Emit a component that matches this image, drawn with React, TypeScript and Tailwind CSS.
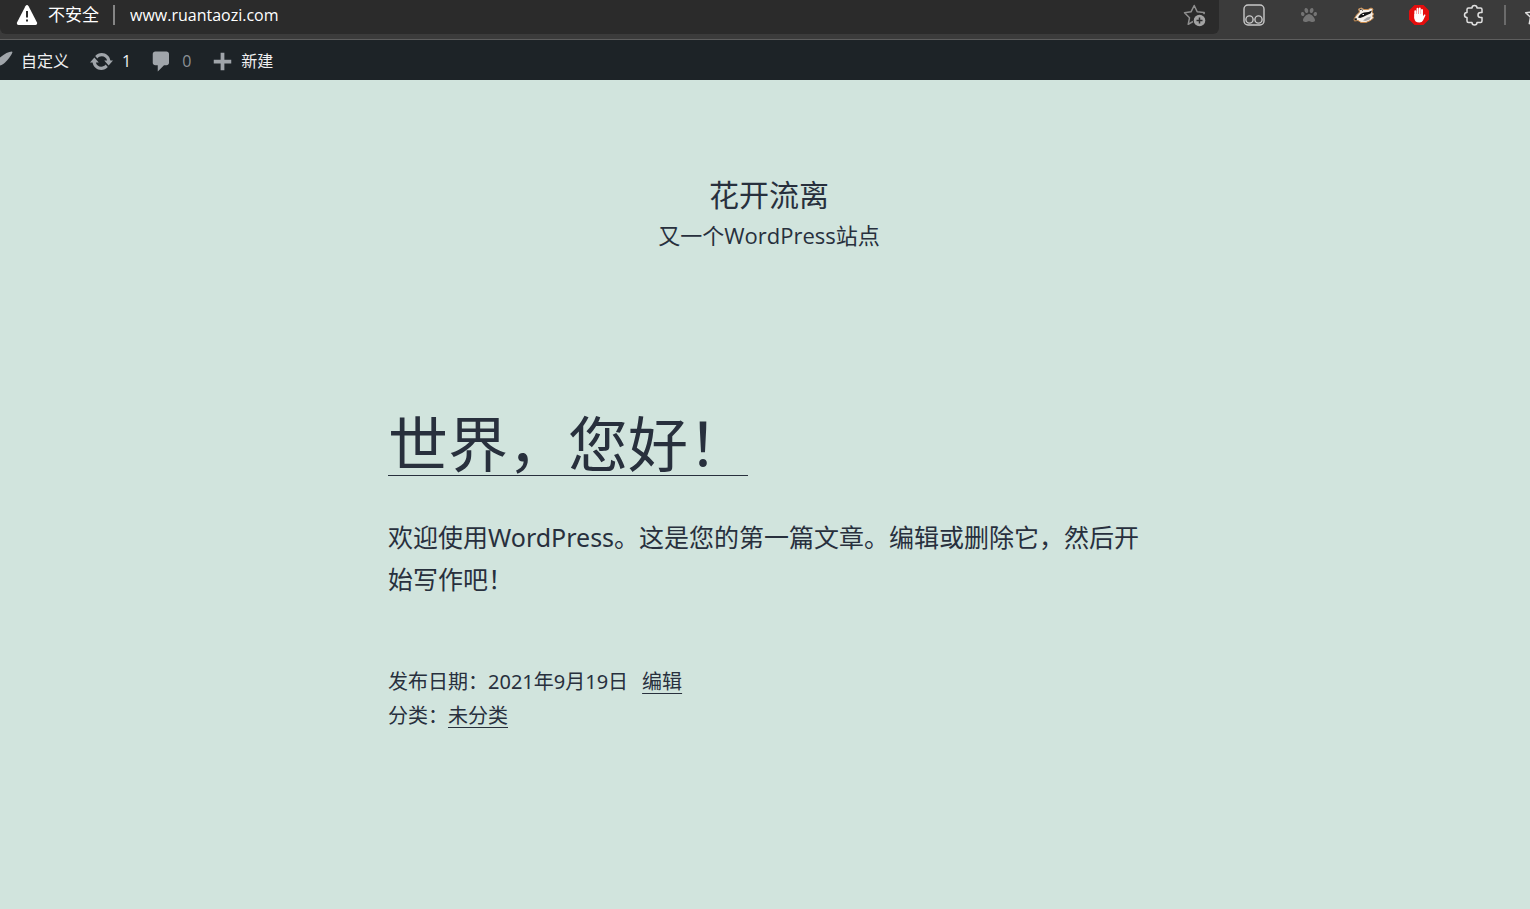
import type { ReactNode } from "react";
import { FaPaw } from "react-icons/fa";

const WarningIcon = () => (
  <svg width="22" height="22" viewBox="0 0 22 22" fill="#fff">
    <path d="M9.4 2.2Q11 0 12.6 2.2L21 18.6Q21.6 21 19.4 21H2.6Q.4 21 1 18.6Z" />
    <path d="M11 7v6.5M11 15.5v2" stroke="#2b2b2b" strokeWidth="2" />
  </svg>
);

const FavoriteIcon = () => (
  <svg width="24" height="24" viewBox="0 0 24 24" fill="none">
    <path
      d="M10 18.5l-4.8 2.8 1.3-6.5L1.5 9.8l6.5-1L11.2 2.5l3 6.3 6.8.6q.8.6-.5 1.6"
      stroke="#8f8f8f"
      strokeWidth="1.5"
      strokeLinejoin="round"
    />
    <circle cx="16.5" cy="17.5" r="5.8" fill="#a3a3a3" />
    <path d="M16.5 14.5v6M13.5 17.5h6" stroke="#2b2b2b" strokeWidth="1.5" />
  </svg>
);

const MonkeyIcon = () => (
  <svg width="22" height="22" viewBox="0 0 22 22" fill="none" stroke="#c8c8c8" strokeWidth="1.4">
    <rect x="1" y="1" width="20" height="20" rx="4" fill="#454545" />
    <circle cx="6.5" cy="15.5" r="3.6" />
    <circle cx="15.5" cy="15.5" r="3.6" />
  </svg>
);

const BadgerIcon = () => (
  <svg width="22" height="18" viewBox="0 0 22 18">
    <path
      d="M1 13L3.5 9 6.5 6 5.5 3 8.5 2 11 3.5 15 3.5 18 2 20 3 19 6 20.500 8 19.500 10 20.500 12 17.500 14.500 13 16.500 8 16.500 5 14.500 1.500 15Z"
      fill="#f4efe8"
      stroke="#c98a4b"
      strokeWidth="1"
      strokeLinejoin="round"
    />
    <path d="M1.500 12.300h2.300v2H1.500z" fill="#151515" />
    <path d="M5 11.500Q7 7.500 11 6.500L15.500 6 19 4.500 17.500 7.500 14 9 10 11 7 12z" fill="#151515" />
    <path d="M9.500 8.500h1.500" stroke="#fff" />
    <path d="M10 14.500l4-3 4-1-1.500 3-4 1.500z" fill="#a5a5a5" />
    <path d="M6.500 3.800l2-.5 1.500 1.200" stroke="#333" fill="none" />
  </svg>
);

const HandIcon = () => (
  <svg width="22" height="22" viewBox="0 0 22 22">
    <path d="M6.5 1h9L21 6.5v9L15.5 21h-9L1 15.5v-9z" fill="#e40d0d" />
    <path
      d="M7.3 14V7.2M9.5 12V4.8M11.8 12V4.5M14 12V6"
      stroke="#fff"
      strokeWidth="1.9"
      strokeLinecap="round"
    />
    <path d="M6.4 10h8.5v2.5l1.3-2q1.5-.5 1.2 1L15 16.5q-1 2-3.5 2Q6.4 18.5 6.4 14z" fill="#fff" />
  </svg>
);

const PuzzleIcon = () => (
  <svg width="22" height="22" viewBox="0 0 22 22" fill="none" stroke="#e0e0e0" strokeWidth="1.5">
    <path
      d="M5.5 4H9a2.500 2.500 0 0 1 5 0h3.500q1.500 0 1.500 1.500V8.500h-1.500a2.500 2.500 0 0 0 0 5H19V17q0 1.500-1.500 1.500H14a2.500 2.500 0 0 1-5 0H5.500Q4 18.500 4 17v-3.500a2.500 2.500 0 0 1 0-5V5.500Q4 4 5.500 4z"
      strokeLinejoin="round"
    />
  </svg>
);

const StarIcon = () => (
  <svg width="22" height="22" viewBox="0 0 22 22" fill="none" stroke="#e0e0e0" strokeWidth="1.5">
    <path d="M11 2l2.800 6 6.500.8-4.800 4.400 1.300 6.500L11 16.500 5.300 19.700l1.200-6.500L1.700 8.800 8.200 8z" strokeLinejoin="round" />
  </svg>
);

const BarIcon = ({ d }: { d: string }) => (
  <svg width="25" height="25" viewBox="0 0 20 20" fill="#a0a5aa" className="shrink-0">
    <path d={d} />
  </svg>
);

const updatePath =
  "M10.2 3.28c3.53 0 6.43 2.61 6.92 6h2.08l-3.5 4-3.5-4h2.32c-.45-1.97-2.21-3.45-4.32-3.45-1.45 0-2.73.71-3.54 1.78L4.95 5.66C6.23 4.2 8.11 3.28 10.2 3.28zm-.4 13.44c-3.52 0-6.43-2.61-6.92-6H.8l3.5-4c1.17 1.33 2.33 2.67 3.5 4H5.48c.45 1.97 2.21 3.45 4.32 3.45 1.45 0 2.73-.71 3.54-1.78l1.71 1.95c-1.28 1.46-3.15 2.38-5.25 2.38z";
const commentPath =
  "M5 2h9q.82 0 1.41.59T16 4v7q0 .82-.59 1.41T14 13h-2l-5 5v-5H5q-.82 0-1.41-.59T3 11V4q0-.82.59-1.41T5 2z";
const plusPath = "M17 8.5v3h-5.5V17h-3v-5.5H3v-3h5.5V3h3v5.5z";

const ToolButton = ({ label, children }: { label: string; children: ReactNode }) => (
  <button aria-label={label} className="flex h-[30px] w-[55px] shrink-0 items-center justify-center">
    {children}
  </button>
);

const BrowserBar = () => (
  <div className="flex h-10 items-start overflow-hidden border-b border-[#5e5e5e] bg-[#3b3b3b]">
    <div className="flex h-[34px] flex-1 items-start rounded-b-md bg-[#2b2b2b] pl-4 pr-3">
      <button className="flex h-[30px] items-center gap-2.5 text-[17px] text-white">
        <WarningIcon />
        不安全
      </button>
      <div className="ml-3.5 mt-[5px] h-5 w-0.5 bg-[#858585]" />
      <input
        aria-label="地址"
        defaultValue="www.ruantaozi.com"
        className="ml-[15px] h-[30px] min-w-0 flex-1 bg-transparent text-base text-white outline-none"
      />
      <button aria-label="收藏" className="flex h-[30px] items-center">
        <FavoriteIcon />
      </button>
    </div>
    <div className="flex w-[311px] shrink-0 overflow-hidden pl-[7px]">
      <ToolButton label="脚本">
        <MonkeyIcon />
      </ToolButton>
      <ToolButton label="百度">
        <FaPaw size={16} color="#747474" />
      </ToolButton>
      <ToolButton label="隐私">
        <BadgerIcon />
      </ToolButton>
      <ToolButton label="拦截广告">
        <HandIcon />
      </ToolButton>
      <ToolButton label="扩展">
        <PuzzleIcon />
      </ToolButton>
      <div className="ml-[3px] mt-[5px] h-5 w-0.5 shrink-0 bg-[#6b6b6b]" />
      <button aria-label="收藏夹" className="ml-[18px] flex h-[30px] shrink-0 items-center">
        <StarIcon />
      </button>
    </div>
  </div>
);

const AdminBar = () => (
  <nav className="flex h-10 items-center bg-[#1d2327] pt-0.5 text-base text-[#f0f0f1]">
    <a href="#customize" className="flex items-center gap-2">
      <svg width="13" height="25" viewBox="0 0 13 25" fill="#a0a5aa">
        <path d="M12 2.500Q13.500 4 7 11.500 3 16 0 16.500V8.500Q7 2.500 12 2.500z" />
      </svg>
      自定义
    </a>
    <a href="#updates" className="ml-5 flex items-center gap-2">
      <BarIcon d={updatePath} />1
    </a>
    <a href="#comments" className="ml-[18px] flex items-center gap-2">
      <BarIcon d={commentPath} />
      <span className="text-[#8c9196]">0</span>
    </a>
    <a href="#new" className="ml-[19px] flex items-center gap-1.5">
      <BarIcon d={plusPath} />
      新建
    </a>
  </nav>
);

const App = () => {
  return (
    <div className="min-h-screen bg-[#d1e4dd] font-['Open_Sans','Noto_Sans_CJK_SC',sans-serif] text-[#28303d]">
      <BrowserBar />
      <AdminBar />

      <div className="mx-auto w-[762px] max-w-full translate-x-1 font-['Noto_Sans','Noto_Sans_CJK_SC',sans-serif]">
        <header className="pt-[95px] text-center">
          <h1 className="text-[30px] leading-10">
            <a href="#home">花开流离</a>
          </h1>
          <p className="font-['Open_Sans','Noto_Sans_CJK_SC',sans-serif] text-[22px] leading-10">又一个WordPress站点</p>
        </header>

        <article className="pt-[158px]">
          <h2 className="flex text-[60px] leading-[62px]">
            <a href="#hello-world" className="border-b border-[#28303d]">
              世界，您好！
            </a>
          </h2>
          <p className="mt-10 text-[25px] leading-[42px]">
            欢迎使用WordPress。这是您的第一篇文章。编辑或删除它，然后开始写作吧！
          </p>

          <footer className="mt-[65px] text-xl leading-[34px]">
            <div className="flex gap-3.5">
              <span>发布日期：2021年9月19日</span>
              <a href="#edit" className="underline decoration-1 underline-offset-4">
                编辑
              </a>
            </div>
            <div>
              分类：
              <a href="#uncategorized" className="underline decoration-1 underline-offset-4">
                未分类
              </a>
            </div>
          </footer>
        </article>
      </div>
    </div>
  );
};

export default App;
